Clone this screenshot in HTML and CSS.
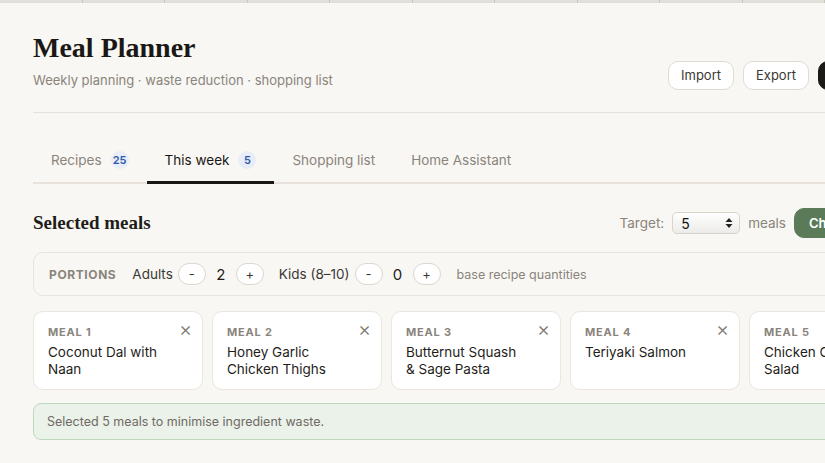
FILE: index.html
```html
<!DOCTYPE html>
<html lang="en">
<head>
  <meta charset="UTF-8">
  <meta name="viewport" content="width=device-width, initial-scale=1.0">
  <title>Meal Planner</title>
  <link rel="stylesheet" href="styles.css">
</head>
<body>
  <div class="topstrip">
    <span></span><span></span><span></span><span></span><span></span>
    <span></span><span></span><span></span><span></span><span></span>
  </div>

  <div class="page">
    <header class="header">
      <div>
        <h1>Meal Planner</h1>
        <p class="subtitle">Weekly planning · waste reduction · shopping list</p>
      </div>
      <div class="header-actions">
        <button class="btn">Import</button>
        <button class="btn">Export</button>
        <button class="btn btn-dark">Generate</button>
      </div>
    </header>

    <nav class="tabs">
      <a class="tab">Recipes <span class="badge">25</span></a>
      <a class="tab active">This week <span class="badge">5</span></a>
      <a class="tab">Shopping list</a>
      <a class="tab">Home Assistant</a>
    </nav>

    <div class="section-head">
      <h2>Selected meals</h2>
      <div class="target">
        <span class="muted">Target:</span>
        <div class="select">
          <span>5</span>
          <svg width="8" height="12" viewBox="0 0 8 12"><path d="M4 1 L7.5 5 H0.5 Z M4 11 L7.5 7 H0.5 Z" fill="#222"/></svg>
        </div>
        <span class="muted">meals</span>
        <button class="btn btn-green">Check pantry</button>
      </div>
    </div>

    <div class="portions">
      <span class="portions-label">PORTIONS</span>
      <span class="group-label">Adults</span>
      <button class="step">-</button>
      <span class="count">2</span>
      <button class="step">+</button>
      <span class="group-label kids">Kids (8–10)</span>
      <button class="step">-</button>
      <span class="count">0</span>
      <button class="step">+</button>
      <span class="hint">base recipe quantities</span>
    </div>

    <div class="meals">
      <div class="meal-card">
        <div class="meal-label">MEAL 1</div>
        <div class="meal-name">Coconut Dal with Naan</div>
        <span class="remove">&times;</span>
      </div>
      <div class="meal-card">
        <div class="meal-label">MEAL 2</div>
        <div class="meal-name">Honey Garlic Chicken Thighs</div>
        <span class="remove">&times;</span>
      </div>
      <div class="meal-card">
        <div class="meal-label">MEAL 3</div>
        <div class="meal-name">Butternut Squash &amp; Sage Pasta</div>
        <span class="remove">&times;</span>
      </div>
      <div class="meal-card">
        <div class="meal-label">MEAL 4</div>
        <div class="meal-name">Teriyaki Salmon</div>
        <span class="remove">&times;</span>
      </div>
      <div class="meal-card">
        <div class="meal-label">MEAL 5</div>
        <div class="meal-name">Chicken Caesar Salad</div>
        <span class="remove">&times;</span>
      </div>
    </div>

    <div class="notice">Selected 5 meals to minimise ingredient waste.</div>
  </div>
</body>
</html>
```

FILE: styles.css
```css
html,
body {
  overflow: hidden;
}

body {
  margin: 0;
  padding: 0;
  font-family: Inter, "Open Sans", sans-serif;
  background-color: #f8f7f3;
  color: #1f1d1a;
}

.topstrip {
  display: flex;
  height: 3px;
  background-color: #e2dfda;
}

.topstrip span {
  width: 92px;
  border-right: 1px solid #c9c5bf;
}

.page {
  width: 886px;
  padding: 0 33px;
}

.header {
  display: flex;
  justify-content: space-between;
  align-items: flex-end;
  padding: 29px 0 24px;
  border-bottom: 1px solid #e5e1da;
}

h1 {
  margin: 0;
  font-family: "Liberation Serif", serif;
  font-size: 28px;
  font-weight: bold;
  color: #1a1816;
}

.subtitle {
  margin: 8px 0 0;
  font-size: 13px;
  color: #8a847c;
}

.header-actions {
  display: flex;
  align-items: center;
  gap: 9px;
  margin-bottom: -2px;
}

.btn {
  font-family: inherit;
  font-size: 13px;
  padding: 5px 12px 6px;
  border-radius: 10px;
  border: 1px solid #e0dbd2;
  background-color: #fff;
  color: #3b3834;
  white-space: nowrap;
  cursor: pointer;
}

.btn-dark {
  background-color: #1c1a17;
  border-color: #1c1a17;
  color: #fff;
  width: 101px;
}

.btn-green {
  background-color: #5b7b58;
  border-color: #5b7b58;
  color: #fff;
  font-weight: 600;
  padding: 6px 14px;
  width: 125px;
  text-align: left;
}

.tabs {
  display: flex;
  margin-top: 27px;
  border-bottom: 2px solid #e7e3dc;
}

.tab {
  display: flex;
  align-items: center;
  gap: 9px;
  padding: 11px 18px 12px;
  font-size: 13.5px;
  color: #8a847c;
  margin-bottom: -2px;
  border-bottom: 3px solid transparent;
}

.tab.active {
  color: #1a1816;
  border-bottom-color: #1a1816;
}

.badge {
  display: inline-flex;
  align-items: center;
  justify-content: center;
  width: 18px;
  height: 18px;
  border-radius: 50%;
  background-color: #e8edf8;
  color: #2f58a8;
  font-size: 11px;
  font-weight: 600;
}

.section-head {
  display: flex;
  justify-content: space-between;
  align-items: center;
  margin-top: 24px;
}

h2 {
  margin: 0;
  font-family: "Liberation Serif", serif;
  font-size: 19px;
  font-weight: bold;
}

.target {
  display: flex;
  align-items: center;
  gap: 8px;
}

.muted {
  color: #8a847c;
  font-size: 13.5px;
}

.select {
  display: flex;
  align-items: center;
  justify-content: space-between;
  width: 52px;
  height: 20px;
  padding: 0 6px 0 8px;
  border: 1px solid #d9d4cb;
  border-radius: 5px;
  background: linear-gradient(#ffffff, #ecebe9);
  font-size: 14px;
  color: #111;
}

.portions {
  display: flex;
  align-items: center;
  margin-top: 14px;
  padding: 10px 15px;
  border: 1px solid #e8e4dc;
  border-radius: 10px;
  font-size: 13.5px;
}

.portions-label {
  font-size: 12px;
  font-weight: 700;
  letter-spacing: 0.6px;
  color: #8a847c;
  margin-right: 16px;
}

.group-label {
  color: #3b3834;
  margin-right: 5px;
}

.group-label.kids {
  margin-left: 15px;
}

.step {
  width: 28px;
  height: 22px;
  border: 1px solid #ddd7ce;
  border-radius: 11px;
  background-color: #fff;
  font-family: inherit;
  font-size: 13px;
  color: #3b3834;
  padding: 0;
}

.count {
  width: 30px;
  text-align: center;
  font-size: 15px;
}

.hint {
  margin-left: 16px;
  font-size: 12.5px;
  color: #8a847c;
}

.meals {
  display: grid;
  grid-template-columns: repeat(5, 1fr);
  gap: 9px;
  margin-top: 15px;
}

.meal-card {
  position: relative;
  height: 51px;
  padding: 13px 14px 13px 14px;
  background-color: #fff;
  border: 1px solid #ebe6de;
  border-radius: 10px;
}

.meal-label {
  font-size: 11px;
  font-weight: 700;
  letter-spacing: 0.8px;
  color: #8a847c;
}

.meal-name {
  margin-top: 5px;
  font-size: 13.5px;
  line-height: 17px;
  color: #1f1d1a;
  padding-right: 20px;
}

.remove {
  position: absolute;
  top: 5px;
  right: 10px;
  font-size: 20px;
  color: #7a756e;
  font-weight: 300;
}

.notice {
  margin-top: 13px;
  padding: 10px 13px;
  background-color: #ebf2ea;
  border: 1px solid #bcd9be;
  border-radius: 8px;
  font-size: 12.5px;
  color: #6f6a63;
}
```
